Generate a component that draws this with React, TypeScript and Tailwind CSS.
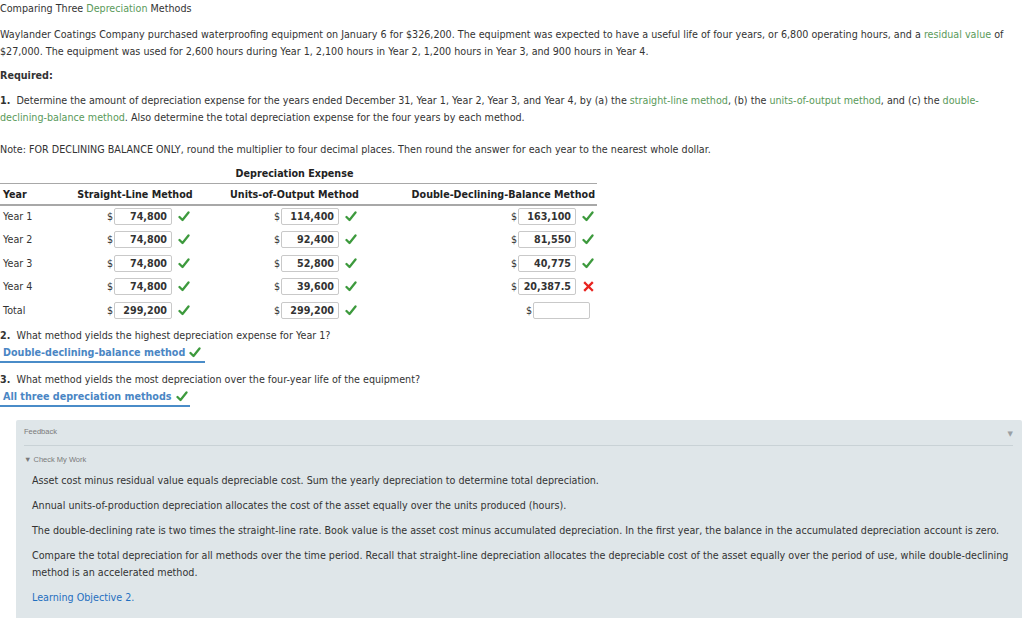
import React from "react";

const F = { fontFamily: '"DejaVu Sans", Verdana, sans-serif' };

function Check() {
  return (
    <svg width="12" height="11" viewBox="0 0 12 11" className="shrink-0">
      <path d="M1.5 6 L4.5 9 L10.5 1.5" fill="none" stroke="#3d9a3d" strokeWidth="2.3" strokeLinecap="round" strokeLinejoin="round" />
    </svg>
  );
}

function Cross() {
  return (
    <svg width="11" height="11" viewBox="0 0 11 11" className="shrink-0">
      <path d="M2 2 L9 9 M9 2 L2 9" stroke="#e8231f" strokeWidth="2.3" strokeLinecap="square" />
    </svg>
  );
}

function Cell({ v, mark }: { v: string; mark?: "ok" | "x" | "none" }) {
  return (
    <div className="flex items-center">
      <span className="text-[#333] mr-[1px]">$</span>
      <div className="w-[58px] h-[17px] bg-white border border-[#c9c9c9] rounded-[2px] flex items-center justify-end pr-[4px] font-bold text-[#333]">{v}</div>
      <div className="w-[18px] flex justify-end">{mark === "ok" ? <Check /> : mark === "x" ? <Cross /> : null}</div>
    </div>
  );
}

const rows = [
  ["Year 1", "74,800", "114,400", "163,100", "ok"],
  ["Year 2", "74,800", "92,400", "81,550", "ok"],
  ["Year 3", "74,800", "52,800", "40,775", "ok"],
  ["Year 4", "74,800", "39,600", "20,387.5", "x"],
];

const G = "text-[#5a9a5a]";

export default function App() {
  return (
    <div className="w-[1024px] h-[618px] overflow-hidden bg-white text-[#333] text-[9.6px] leading-[17px]" style={F}>
      <div className="pl-[0px]">
        <div className="h-[17px]">Comparing Three <span className={G}>Depreciation</span> Methods</div>
        <div className="mt-[8.5px] whitespace-nowrap">
          Waylander Coatings Company purchased waterproofing equipment on January 6 for $326,200. The equipment was expected to have a useful life of four years, or 6,800 operating hours, and a <span className={G}>residual value</span> of
          <br />
          $27,000. The equipment was used for 2,600 hours during Year 1, 2,100 hours in Year 2, 1,200 hours in Year 3, and 900 hours in Year 4.
        </div>
        <div className="mt-[7.5px] font-bold">Required:</div>
        <div className="mt-[9px] whitespace-nowrap leading-[16.5px]">
          <b>1.</b>&nbsp; Determine the amount of depreciation expense for the years ended December 31, Year 1, Year 2, Year 3, and Year 4, by (a) the <span className={G}>straight-line method</span>, (b) the <span className={G}>units-of-output method</span>, and (c) the <span className={G}>double-</span>
          <br />
          <span className={G}>declining-balance method</span>. Also determine the total depreciation expense for the four years by each method.
        </div>
        <div className="mt-[15px]">Note: FOR DECLINING BALANCE ONLY, round the multiplier to four decimal places. Then round the answer for each year to the nearest whole dollar.</div>

        {/* table */}
        <div className="mt-[6.5px] w-[597px]">
          <div className="h-[19px] border-b border-[#a8a8a8] flex">
            <div className="w-[200px]" />
            <div className="w-[189px] text-center font-bold text-[#222] leading-[18px]">Depreciation Expense</div>
          </div>
          <div className="h-[22px] border-b-2 border-[#a8a8a8] flex items-center pt-[2px] font-bold text-[#222]">
            <div className="w-[70px] pl-[3px]">Year</div>
            <div className="w-[130px] text-center">Straight-Line Method</div>
            <div className="w-[189px] text-center">Units-of-Output Method</div>
            <div className="flex-1 text-right pr-[2px]">Double-Declining-Balance Method</div>
          </div>
          {rows.map((r) => (
            <div key={r[0]} className="h-[23.5px] flex items-start pt-[2px]">
              <div className="w-[70px] pl-[3px] leading-[17px]">{r[0]}</div>
              <div className="w-[130px] flex justify-end pr-[10px]"><Cell v={r[1]} mark="ok" /></div>
              <div className="w-[189px] flex justify-end pr-[32px]"><Cell v={r[2]} mark="ok" /></div>
              <div className="flex-1 flex justify-end pr-[3px]"><Cell v={r[3]} mark={r[4] as "ok" | "x"} /></div>
            </div>
          ))}
          <div className="h-[23.5px] flex items-start pt-[2px]">
            <div className="w-[70px] pl-[3px] leading-[17px]">Total</div>
            <div className="w-[130px] flex justify-end pr-[10px]"><Cell v="299,200" mark="ok" /></div>
            <div className="w-[189px] flex justify-end pr-[32px]"><Cell v="299,200" mark="ok" /></div>
            <div className="flex-1 flex justify-end pr-[7px]">
              <div className="flex items-center">
                <span className="mr-[1px]">$</span>
                <div className="w-[57px] h-[17px] bg-white border border-[#c9c9c9] rounded-[2px]" />
              </div>
            </div>
          </div>
        </div>

        <div className="mt-[3.5px]"><b>2.</b>&nbsp; What method yields the highest depreciation expense for Year 1?</div>
        <div className="inline-flex items-center gap-[4px] border-b-2 border-[#4a8cc8] pl-[3px] pr-[4px] leading-[16px] font-bold text-[#4a86c4]">
          Double-declining-balance method <Check />
        </div>
        <div className="mt-[8px]"><b>3.</b>&nbsp; What method yields the most depreciation over the four-year life of the equipment?</div>
        <div className="inline-flex items-center gap-[4px] border-b-2 border-[#4a8cc8] pl-[3px] pr-[2px] leading-[16px] font-bold text-[#4a86c4]">
          All three depreciation methods <Check />
        </div>
      </div>

      <div className="mt-[13px] ml-[16px] w-[1006px] bg-[#dfe6e9] rounded-[2px] pb-[40px]">
        <div className="relative px-[8px] pt-[6px]">
          <div className="text-[7.5px] leading-[12px] text-[#7a7a7a]" style={{ fontFamily: '"Liberation Sans", Arial, sans-serif' }}>Feedback</div>
          <div className="absolute right-[9px] top-[6px] text-[7px] text-[#9aa0a4]">▼</div>
          <div className="mt-[7px] border-b border-[#c9d2d6] mr-[1px]" />
          <div className="mt-[8px] text-[7.5px] leading-[12px] text-[#7a7a7a]" style={{ fontFamily: '"Liberation Sans", Arial, sans-serif' }}>▼ Check My Work</div>
          <div className="pl-[8px] mt-[6px]">
            <p>Asset cost minus residual value equals depreciable cost. Sum the yearly depreciation to determine total depreciation.</p>
            <p className="mt-[8px]">Annual units-of-production depreciation allocates the cost of the asset equally over the units produced (hours).</p>
            <p className="mt-[8px]">The double-declining rate is two times the straight-line rate. Book value is the asset cost minus accumulated depreciation. In the first year, the balance in the accumulated depreciation account is zero.</p>
            <p className="mt-[8px] whitespace-nowrap">Compare the total depreciation for all methods over the time period. Recall that straight-line depreciation allocates the depreciable cost of the asset equally over the period of use, while double-declining<br />method is an accelerated method.</p>
            <p className="mt-[8px] text-[#1f6fc0]">Learning Objective 2.</p>
          </div>
        </div>
      </div>
    </div>
  );
}
